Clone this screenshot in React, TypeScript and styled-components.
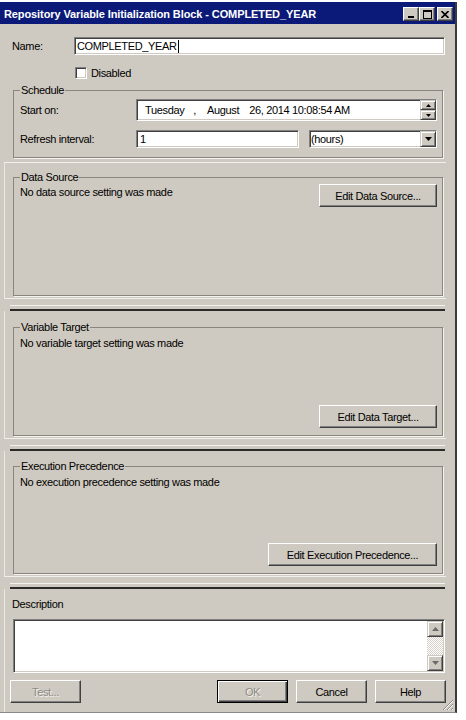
import React from 'react';
import styled, { createGlobalStyle } from 'styled-components';

const C = {
  face: '#cfcac1',
  light: '#ffffff',
  shadow: '#808080',
  dark: '#404040',
  navy: '#0b1a78',
};

const GlobalStyle = createGlobalStyle`
  html, body { margin: 0; padding: 0; background: #ffffff; }
  body {
    font-family: "Liberation Sans", Arial, sans-serif;
    font-size: 11px;
    letter-spacing: -0.35px;
    color: #000;
  }
  * { box-sizing: border-box; }
`;

const Window = styled.div`
  position: relative;
  margin-top: 2px;
  width: 457px;
  height: 711px;
  background: ${C.face};
  border-right: 2px solid #3a3a3a;
  border-bottom: 1px solid #8a8a8a;
  display: flex;
  flex-direction: column;
`;

const TitleBar = styled.div`
  height: 22px;
  background: ${C.navy};
  display: flex;
  align-items: center;
  padding: 2px 2px 0 4px;
`;

const TitleText = styled.div`
  flex: 1;
  color: #fff;
  font-weight: bold;
  font-size: 11px;
  letter-spacing: -0.1px;
  line-height: 13px;
  padding-top: 1px;
  white-space: nowrap;
`;

const CaptionButton = styled.div<{ $gap?: number }>`
  width: 16px;
  height: 14px;
  margin-left: ${(p) => p.$gap ?? 0}px;
  background: ${C.face};
  border: 1px solid;
  border-color: ${C.light} ${C.dark} ${C.dark} ${C.light};
  box-shadow: inset -1px -1px ${C.shadow};
  display: flex;
  align-items: center;
  justify-content: center;
`;

const Form = styled.div`
  flex: 1;
  display: flex;
  flex-direction: column;
  padding-top: 13px;
`;

const NameRow = styled.div`
  display: flex;
  align-items: center;
  height: 18px;
  padding-left: 12px;
`;

const FieldLabel = styled.span<{ $w: number }>`
  width: ${(p) => p.$w}px;
  flex: none;
  white-space: nowrap;
`;

const Sunken = styled.div<{ $w: number; $h: number }>`
  width: ${(p) => p.$w}px;
  height: ${(p) => p.$h}px;
  flex: none;
  background: #fff;
  border: 1px solid;
  border-color: ${C.shadow} ${C.light} ${C.light} ${C.shadow};
  box-shadow: inset 1px 1px ${C.dark}, inset -1px -1px ${C.face};
  display: flex;
  align-items: center;
  white-space: pre;
`;

const FieldText = styled.span<{ $pad: number }>`
  padding-left: ${(p) => p.$pad}px;
`;

const Caret = styled.span`
  display: inline-block;
  width: 1px;
  height: 13px;
  background: #000;
  margin-left: 1px;
`;

const CheckRow = styled.div`
  display: flex;
  align-items: center;
  height: 13px;
  margin-top: 11px;
  padding-left: 75px;
  gap: 4px;
`;

const CheckBox = styled.span`
  width: 12px;
  height: 12px;
  background: #fff;
  border: 1px solid;
  border-color: ${C.shadow} ${C.light} ${C.light} ${C.shadow};
  box-shadow: inset 1px 1px ${C.dark}, inset -1px -1px ${C.face};
`;

const GroupBox = styled.fieldset<{ $h?: number; $pt?: number; $pb?: number }>`
  margin: 0 0 0 8px;
  width: 430px;
  ${(p) => (p.$h ? `height: ${p.$h}px;` : '')}
  padding: ${(p) => p.$pt ?? 0}px 5px ${(p) => p.$pb ?? 7}px 6px;
  border: 1px solid #8a867e;
  box-shadow: 1px 1px 0 #f6f4f0;
  min-width: 0;
`;

const Legend = styled.legend`
  padding: 0 1px;
  line-height: 13px;
  height: 13px;
`;

const ScheduleBox = styled(GroupBox)`
  margin: 5px 0 0 13px;
`;

const ScheduleRow = styled.div<{ $mt: number; $h: number }>`
  display: flex;
  align-items: center;
  height: ${(p) => p.$h}px;
  margin-top: ${(p) => p.$mt}px;
`;

const DateSeg = styled.span<{ $ml: number }>`
  margin-left: ${(p) => p.$ml}px;
`;

const Spinner = styled.div`
  margin-left: auto;
  display: flex;
  flex-direction: column;
  width: 16px;
  height: 20px;
`;

const SpinHalf = styled.div`
  flex: 1;
  background: ${C.face};
  border: 1px solid;
  border-color: ${C.face} ${C.dark} ${C.dark} ${C.face};
  box-shadow: inset 1px 1px ${C.light}, inset -1px -1px ${C.shadow};
  display: flex;
  align-items: center;
  justify-content: center;
`;

const ComboButton = styled.div`
  margin-left: auto;
  width: 16px;
  height: 16px;
  background: ${C.face};
  border: 1px solid;
  border-color: ${C.face} ${C.dark} ${C.dark} ${C.face};
  box-shadow: inset 1px 1px ${C.light}, inset -1px -1px ${C.shadow};
  display: flex;
  align-items: center;
  justify-content: center;
`;

const PaneStack = styled.div`
  margin-top: 4px;
  margin-left: 4px;
  width: 442px;
  flex: 1;
  display: flex;
  flex-direction: column;
`;

const Pane = styled.div<{ $pt: number; $top?: boolean }>`
  padding-top: ${(p) => p.$pt}px;
  border-left: 1px solid #ebe8e3;
  border-top: ${(p) => (p.$top ? '1px solid #f2f0ec' : '0')};
  border-bottom: 1px solid #f2f0ec;
  padding-bottom: 2px;
`;

const LastPane = styled.div`
  flex: 1;
  border-left: 1px solid #ebe8e3;
  padding-top: 9px;
  display: flex;
  flex-direction: column;
`;

const Splitter = styled.div`
  margin: 6px 0 0 6px;
  width: 435px;
  height: 6px;
  border-top: 1px solid #f4f2ee;
  border-bottom: 2px solid #2c2a28;
`;

const GroupBody = styled.div<{ $bottom?: boolean }>`
  height: 100%;
  display: flex;
  flex-direction: ${(p) => (p.$bottom ? 'column' : 'row')};
  justify-content: space-between;
  align-items: ${(p) => (p.$bottom ? 'stretch' : 'flex-start')};
`;

const Info = styled.div<{ $mt: number }>`
  margin-top: ${(p) => p.$mt}px;
  line-height: 13px;
  white-space: nowrap;
`;

const Button = styled.div<{ $w: number; $default?: boolean; $disabled?: boolean }>`
  width: ${(p) => p.$w}px;
  height: 23px;
  flex: none;
  align-self: flex-end;
  background: ${C.face};
  border: 1px solid;
  border-color: ${(p) => (p.$default ? '#000 #000 #000 #000' : `${C.light} ${C.dark} ${C.dark} ${C.light}`)};
  box-shadow: ${(p) =>
    p.$default
      ? `inset 1px 1px ${C.light}, inset -1px -1px ${C.dark}, inset -2px -2px ${C.shadow}`
      : `inset -1px -1px ${C.shadow}`};
  display: flex;
  align-items: center;
  justify-content: center;
  color: ${(p) => (p.$disabled ? '#8c8a86' : '#000')};
  text-shadow: ${(p) => (p.$disabled ? '1px 1px 0 #f4f2ee' : 'none')};
  white-space: nowrap;
`;

const DescLabel = styled.div`
  padding-left: 7px;
  line-height: 13px;
`;

const DescBox = styled(Sunken)`
  margin: 8px 0 0 8px;
  align-items: stretch;
  justify-content: flex-end;
  padding: 1px;
`;

const ScrollBar = styled.div`
  width: 16px;
  display: flex;
  flex-direction: column;
`;

const ScrollArrow = styled.div`
  height: 16px;
  background: ${C.face};
  border: 1px solid;
  border-color: ${C.face} ${C.dark} ${C.dark} ${C.face};
  box-shadow: inset 1px 1px ${C.light}, inset -1px -1px ${C.shadow};
  display: flex;
  align-items: center;
  justify-content: center;
`;

const ScrollTrack = styled.div`
  flex: 1;
  background-color: #ebe9e4;
  background-image: repeating-conic-gradient(#ffffff 0 25%, #d6d2ca 0 50%);
  background-size: 2px 2px;
`;

const ButtonRow = styled.div`
  display: flex;
  margin-top: 7px;
  padding-left: 5px;
  gap: 8px;
`;

const Spacer = styled.div`
  flex: 1;
`;

const Grip = styled.svg`
  position: absolute;
  right: 1px;
  bottom: 1px;
`;

const Tri = ({ up, size = 7, color = '#000' }: { up?: boolean; size?: number; color?: string }) => {
  const h = Math.ceil(size / 2);
  return (
    <svg width={size} height={h} viewBox={`0 0 ${size} ${h}`}>
      <polygon points={up ? `${size / 2},0 ${size},${h} 0,${h}` : `0,0 ${size},0 ${size / 2},${h}`} fill={color} />
    </svg>
  );
};

export default function App() {
  return (
    <>
      <GlobalStyle />
      <Window>
        <TitleBar>
          <TitleText>Repository Variable Initialization Block - COMPLETED_YEAR</TitleText>
          <CaptionButton>
            <svg width="8" height="8" viewBox="0 0 8 8">
              <rect x="1" y="6" width="6" height="2" fill="#000" />
            </svg>
          </CaptionButton>
          <CaptionButton>
            <svg width="9" height="9" viewBox="0 0 9 9">
              <rect x="0.5" y="0.5" width="8" height="8" fill="none" stroke="#000" />
              <rect x="0" y="0" width="9" height="2" fill="#000" />
            </svg>
          </CaptionButton>
          <CaptionButton $gap={2}>
            <svg width="8" height="7" viewBox="0 0 8 7">
              <path d="M0.5 0 L7.5 7 M7.5 0 L0.5 7" stroke="#000" strokeWidth="1.6" />
            </svg>
          </CaptionButton>
        </TitleBar>

        <Form>
          <NameRow>
            <FieldLabel $w={62}>Name:</FieldLabel>
            <Sunken $w={371} $h={18}>
              <FieldText $pad={2}>COMPLETED_YEAR</FieldText>
              <Caret />
            </Sunken>
          </NameRow>

          <CheckRow>
            <CheckBox />
            <span>Disabled</span>
          </CheckRow>

          <ScheduleBox $pt={2} $pb={9}>
            <Legend>Schedule</Legend>
            <ScheduleRow $mt={0} $h={22}>
              <FieldLabel $w={116}>Start on:</FieldLabel>
              <Sunken $w={301} $h={22}>
                <DateSeg $ml={8}>Tuesday</DateSeg>
                <DateSeg $ml={9}>,</DateSeg>
                <DateSeg $ml={11}>August</DateSeg>
                <DateSeg $ml={10}>26, 2014 10:08:54 AM</DateSeg>
                <Spinner>
                  <SpinHalf>
                    <Tri up size={5} />
                  </SpinHalf>
                  <SpinHalf>
                    <Tri size={5} />
                  </SpinHalf>
                </Spinner>
              </Sunken>
            </ScheduleRow>
            <ScheduleRow $mt={9} $h={18}>
              <FieldLabel $w={116}>Refresh interval:</FieldLabel>
              <Sunken $w={163} $h={18}>
                <FieldText $pad={3}>1</FieldText>
              </Sunken>
              <Sunken $w={128} $h={18} style={{ marginLeft: 10 }}>
                <FieldText $pad={1}>(hours)</FieldText>
                <ComboButton>
                  <Tri size={7} />
                </ComboButton>
              </Sunken>
            </ScheduleRow>
          </ScheduleBox>

          <PaneStack>
            <Pane $pt={8} $top>
              <GroupBox $h={125}>
                <Legend>Data Source</Legend>
                <GroupBody>
                  <Info $mt={2}>No data source setting was made</Info>
                  <Button $w={118} style={{ alignSelf: 'flex-start' }}>Edit Data Source...</Button>
                </GroupBody>
              </GroupBox>
            </Pane>
            <Splitter />
            <Pane $pt={10}>
              <GroupBox $h={115}>
                <Legend>Variable Target</Legend>
                <GroupBody $bottom>
                  <Info $mt={3}>No variable target setting was made</Info>
                  <Button $w={118}>Edit Data Target...</Button>
                </GroupBody>
              </GroupBox>
            </Pane>
            <Splitter />
            <Pane $pt={9}>
              <GroupBox $h={114}>
                <Legend>Execution Precedence</Legend>
                <GroupBody $bottom>
                  <Info $mt={3}>No execution precedence setting was made</Info>
                  <Button $w={169}>Edit Execution Precedence...</Button>
                </GroupBody>
              </GroupBox>
            </Pane>
            <Splitter />
            <LastPane>
              <DescLabel>Description</DescLabel>
              <DescBox $w={432} $h={54}>
                <ScrollBar>
                  <ScrollArrow>
                    <Tri up size={7} color="#6a6a6a" />
                  </ScrollArrow>
                  <ScrollTrack />
                  <ScrollArrow>
                    <Tri size={7} color="#6a6a6a" />
                  </ScrollArrow>
                </ScrollBar>
              </DescBox>
              <ButtonRow>
                <Button $w={71} $disabled>Test...</Button>
                <Spacer />
                <Button $w={71} $default $disabled>OK</Button>
                <Button $w={71}>Cancel</Button>
                <Button $w={71}>Help</Button>
              </ButtonRow>
            </LastPane>
          </PaneStack>
        </Form>

        <Grip width="12" height="12" viewBox="0 0 12 12">
          <path d="M11 1 L1 11 M11 5 L5 11 M11 9 L9 11" stroke="#8a8a8a" strokeWidth="1" />
          <path d="M11 2 L2 11 M11 6 L6 11 M11 10 L10 11" stroke="#ffffff" strokeWidth="1" />
        </Grip>
      </Window>
    </>
  );
}
